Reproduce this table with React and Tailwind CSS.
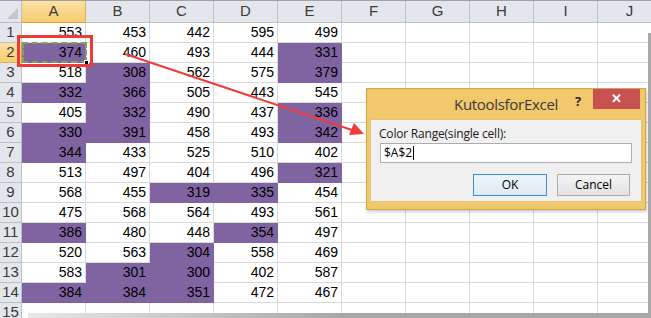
const ROWS = [
  '553 453 442 595 499',
  '374* 460 493 444 331*',
  '518 308* 562 575 379*',
  '332* 366* 505 443 545',
  '405 332* 490 437 336*',
  '330* 391* 458 493 342*',
  '344* 433 525 510 402',
  '513 497 404 496 321*',
  '568 455 319* 335* 454',
  '475 568 564 493 561',
  '386* 480 448 354* 497',
  '520 563 304* 558 469',
  '583 301* 300* 402 587',
  '384* 384* 351* 472 467',
  '',
];

const COLS = ['A', 'B', 'C', 'D', 'E', 'F', 'G', 'H', 'I', 'J'];

function Cell({ value }) {
  const purple = value && value.endsWith('*');
  const text = value ? value.replace('*', '') : '';
  return (
    <div
      className={
        'flex items-end justify-end pr-[3px] pb-[1px] border-r border-b text-[14px] leading-[17px] text-black ' +
        (purple ? 'bg-[#8064a2] border-[#8064a2]' : 'bg-white border-[#d9d9d9]')
      }
    >
      {text}
    </div>
  );
}

function Sheet() {
  return (
    <div className="grid grid-cols-[22px_repeat(10,64px)] grid-rows-[22px_repeat(15,20px)] border-t border-[#9ea3aa] font-['Liberation_Sans',sans-serif]">
      {/* corner */}
      <div className="relative bg-[#e3e6eb] border-r border-b border-[#b9bec5]">
        <div className="absolute right-[3px] bottom-[3px] w-0 h-0 border-l-[11px] border-l-transparent border-b-[11px] border-b-[#c3c7cd]" />
      </div>
      {COLS.map((c) => (
        <div
          key={c}
          className={
            'flex items-center justify-center border-r border-b text-[15px] ' +
            (c === 'A'
              ? 'bg-gradient-to-b from-[#fbe1a3] to-[#f6cd6f] border-r-[#d8b35e] border-b-[#e89a2c] text-[#3b3b3b]'
              : 'bg-[#e3e6eb] border-[#bcc1c8] text-[#3b3b3b]')
          }
        >
          {c}
        </div>
      ))}
      {ROWS.map((row, i) => {
        const vals = row ? row.split(' ') : [];
        return [
          <div
            key={'h' + i}
            className={
              'flex items-center justify-center border-r border-b text-[15px] ' +
              (i === 1
                ? 'bg-gradient-to-b from-[#fbe1a3] to-[#f6cd6f] border-r-[#e89a2c] border-b-[#d8b35e] text-[#3b3b3b]'
                : 'bg-[#e3e6eb] border-[#bcc1c8] text-[#3b3b3b]')
            }
          >
            {i + 1}
          </div>,
          ...COLS.map((c, j) => <Cell key={c + i} value={vals[j]} />),
        ];
      })}
    </div>
  );
}

function Dialog() {
  return (
    <div className="absolute left-[366px] top-[88px] w-[280px] h-[122px] bg-[#f1c86c] border border-[#cfa44e] shadow-[1px_2px_3px_rgba(0,0,0,0.2)] font-['Open_Sans',sans-serif] flex flex-col">
      <div className="relative h-[30px] flex items-center justify-center">
        <span className="text-[15px] text-[#3a3a3a] tracking-[-0.3px]">KutoolsforExcel</span>
        <span className="absolute left-[208px] top-[3px] text-[13px] font-bold text-[#2a2a2a]">?</span>
        <div className="absolute right-[5px] top-0 w-[47px] h-[20px] bg-[#c75050] flex items-center justify-center text-white text-[13px] font-bold">
          ✕
        </div>
      </div>
      <div className="mx-[3px] mb-[7px] flex-1 bg-[#f0f0f0] border border-[#e2c27e] px-[8px] pt-[6px]">
        <div className="text-[12px] leading-[15px] text-[#1a1a1a] tracking-[-0.2px]">Color Range(single cell):</div>
        <div className="mt-[2px] ml-[1px] w-[252px] h-[20px] bg-white border border-[#abadb3] flex items-center pl-[3px] text-[12px] text-black">
          $A$2<span className="inline-block w-px h-[14px] bg-black ml-[1px]" />
        </div>
        <div className="mt-[11px] flex justify-end gap-[10px] pr-[3px]">
          <div className="w-[74px] h-[22px] flex items-center justify-center border border-[#3c8fd6] bg-gradient-to-b from-[#eef5fb] to-[#dde9f4] text-[12px] text-black">
            OK
          </div>
          <div className="w-[73px] h-[22px] flex items-center justify-center border border-[#acacac] bg-gradient-to-b from-[#f3f3f3] to-[#e3e3e3] text-[12px] text-black">
            Cancel
          </div>
        </div>
      </div>
    </div>
  );
}

export default function App() {
  return (
    <div className="relative w-[651px] h-[318px] overflow-hidden bg-white">
      <Sheet />

      {/* active cell marching ants */}
      <div className="absolute left-[22px] top-[42px] w-[65px] h-[21px] border-2 border-dashed border-[#8c9a5e]" />
      <div className="absolute left-[84px] top-[60px] w-[5px] h-[5px] bg-black border border-white" />

      {/* red highlight box */}
      <div className="absolute left-[17px] top-[35px] w-[76px] h-[32px] border-[3px] border-[#ef3a3a]" />

      {/* arrow */}
      <svg className="absolute left-0 top-0" width="651" height="318">
        <line x1="125" y1="54" x2="352" y2="130" stroke="#ee3b3b" strokeWidth="2" />
        <polygon points="364,134 349,135 354,123" fill="#ee3b3b" />
      </svg>

      <Dialog />

      {/* screenshot drop shadow */}
      <div className="absolute left-[648px] top-[33px] w-[3px] h-[285px] bg-[#a8a8a8]" />
      <div className="absolute left-[28px] top-[313px] w-[623px] h-[5px] bg-gradient-to-r from-[#e8e8e8] via-[#a8a8a8] to-[#a8a8a8]" />
    </div>
  );
}
